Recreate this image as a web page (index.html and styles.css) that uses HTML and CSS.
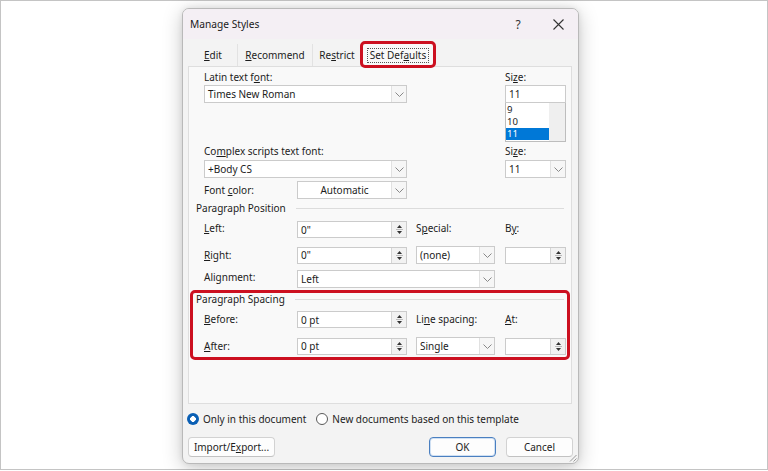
FILE: index.html
```html
<!DOCTYPE html>
<html>
<head>
<meta charset="utf-8">
<link rel="stylesheet" href="styles.css">
</head>
<body>
<div class="frame">
  <div class="dialog">
    <div class="titlebar">
      <span class="title">Manage Styles</span>
      <span class="tb-btn help">?</span>
      <span class="tb-btn close"><svg width="11" height="11" viewBox="0 0 11 11"><path d="M0.5 0.5L10.5 10.5M10.5 0.5L0.5 10.5" stroke="#333" stroke-width="1.1"/></svg></span>
    </div>

    <div class="tabs">
      <div class="tab t-edit"><u>E</u>dit</div>
      <div class="tab t-rec"><u>R</u>ecommend</div>
      <div class="tab t-res">Re<u>s</u>trict</div>
      <div class="tab t-set active"><span class="focus">Set Def<u>a</u>ults</span><span class="hl-tab"></span></div>
    </div>

    <div class="panel">
      <div class="row lab-row">
        <span class="w-wide">Latin text f<u>o</u>nt:</span>
        <span class="spacer"></span>
        <span class="w-size">Si<u>z</u>e:</span>
      </div>
      <div class="row latin-row">
        <div class="combo w-wide"><span class="val">Times New Roman</span><span class="dd"><svg width="9" height="5" viewBox="0 0 9 5"><path d="M0.5 0.5L4.5 4.5L8.5 0.5" fill="none" stroke="#888" stroke-width="1"/></svg></span></div>
        <span class="spacer"></span>
        <div class="sizebox w-size">
          <div class="size-input">11</div>
          <div class="size-list">
            <div class="items">
              <div class="item">9</div>
              <div class="item">10</div>
              <div class="item sel">11</div>
            </div>
            <div class="sbar"></div>
          </div>
        </div>
      </div>

      <div class="row lab-row lab2">
        <span class="w-wide">Co<u>m</u>plex scripts text font:</span>
        <span class="spacer"></span>
        <span class="w-size">Si<u>z</u>e:</span>
      </div>
      <div class="row ctl-row">
        <div class="combo w-wide"><span class="val">+Body CS</span><span class="dd"><svg width="9" height="5" viewBox="0 0 9 5"><path d="M0.5 0.5L4.5 4.5L8.5 0.5" fill="none" stroke="#888" stroke-width="1"/></svg></span></div>
        <span class="spacer"></span>
        <div class="combo w-size"><span class="val">11</span><span class="dd"><svg width="9" height="5" viewBox="0 0 9 5"><path d="M0.5 0.5L4.5 4.5L8.5 0.5" fill="none" stroke="#888" stroke-width="1"/></svg></span></div>
      </div>
      <div class="row ctl-row fc-row">
        <span class="c-lab">Font <u>c</u>olor:</span>
        <div class="combo c-ctl"><span class="val center">Automatic</span><span class="dd"><svg width="9" height="5" viewBox="0 0 9 5"><path d="M0.5 0.5L4.5 4.5L8.5 0.5" fill="none" stroke="#888" stroke-width="1"/></svg></span></div>
      </div>

      <div class="group-head pp-head"><span>Paragraph Position</span><span class="gline"></span></div>
      <div class="row frow r-left">
        <span class="c-lab up"><u>L</u>eft:</span>
        <div class="spin c-ctl"><span class="val">0"</span><span class="sb"><svg width="7" height="13" viewBox="0 0 7 13"><path d="M3.5 2L6 5H1Z" fill="#333"/><path d="M0 6.5H7" stroke="#bbb" stroke-width="1"/><path d="M1 8H6L3.5 11Z" fill="#333"/></svg></span></div>
        <span class="c-3 up">S<u>p</u>ecial:</span>
        <span class="c-4 up">B<u>y</u>:</span>
      </div>
      <div class="row frow r-right">
        <span class="c-lab"><u>R</u>ight:</span>
        <div class="spin c-ctl"><span class="val">0"</span><span class="sb"><svg width="7" height="13" viewBox="0 0 7 13"><path d="M3.5 2L6 5H1Z" fill="#333"/><path d="M0 6.5H7" stroke="#bbb" stroke-width="1"/><path d="M1 8H6L3.5 11Z" fill="#333"/></svg></span></div>
        <div class="combo c-3"><span class="val">(none)</span><span class="dd"><svg width="9" height="5" viewBox="0 0 9 5"><path d="M0.5 0.5L4.5 4.5L8.5 0.5" fill="none" stroke="#888" stroke-width="1"/></svg></span></div>
        <div class="spin c-4"><span class="val"></span><span class="sb"><svg width="7" height="13" viewBox="0 0 7 13"><path d="M3.5 2L6 5H1Z" fill="#333"/><path d="M0 6.5H7" stroke="#bbb" stroke-width="1"/><path d="M1 8H6L3.5 11Z" fill="#333"/></svg></span></div>
      </div>
      <div class="row frow r-align">
        <span class="c-lab up">Alignment:</span>
        <div class="combo c-wide2"><span class="val">Left</span><span class="dd"><svg width="9" height="5" viewBox="0 0 9 5"><path d="M0.5 0.5L4.5 4.5L8.5 0.5" fill="none" stroke="#888" stroke-width="1"/></svg></span></div>
      </div>

      <div class="redbox">
        <div class="group-head ps-head"><span>Paragraph Spacing</span><span class="gline"></span></div>
        <div class="row frow r-before">
          <span class="c-lab up1"><u>B</u>efore:</span>
          <div class="spin c-ctl"><span class="val">0 pt</span><span class="sb"><svg width="7" height="13" viewBox="0 0 7 13"><path d="M3.5 2L6 5H1Z" fill="#333"/><path d="M0 6.5H7" stroke="#bbb" stroke-width="1"/><path d="M1 8H6L3.5 11Z" fill="#333"/></svg></span></div>
          <span class="c-3 up1">Li<u>n</u>e spacing:</span>
          <span class="c-4 up1"><u>A</u>t:</span>
        </div>
        <div class="row frow r-after">
          <span class="c-lab"><u>A</u>fter:</span>
          <div class="spin c-ctl"><span class="val">0 pt</span><span class="sb"><svg width="7" height="13" viewBox="0 0 7 13"><path d="M3.5 2L6 5H1Z" fill="#333"/><path d="M0 6.5H7" stroke="#bbb" stroke-width="1"/><path d="M1 8H6L3.5 11Z" fill="#333"/></svg></span></div>
          <div class="combo c-3"><span class="val">Single</span><span class="dd"><svg width="9" height="5" viewBox="0 0 9 5"><path d="M0.5 0.5L4.5 4.5L8.5 0.5" fill="none" stroke="#888" stroke-width="1"/></svg></span></div>
          <div class="spin c-4"><span class="val"></span><span class="sb"><svg width="7" height="13" viewBox="0 0 7 13"><path d="M3.5 2L6 5H1Z" fill="#333"/><path d="M0 6.5H7" stroke="#bbb" stroke-width="1"/><path d="M1 8H6L3.5 11Z" fill="#333"/></svg></span></div>
        </div>
      </div>
    </div>

    <div class="radios">
      <span class="radio checked"></span><span class="rlabel">Only in this document</span>
      <span class="radio r2"></span><span class="rlabel">New documents based on this template</span>
    </div>

    <div class="buttons">
      <div class="btn b-import">Import/E<u>x</u>port...</div>
      <span class="spacer"></span>
      <div class="btn b-ok">OK</div>
      <div class="btn b-cancel">Cancel</div>
    </div>

    <svg class="grip" width="8" height="8" viewBox="0 0 8 8"><path d="M7.5 1L1 7.5M7.5 4.5L4.5 7.5" stroke="#999" stroke-width="1"/></svg>
  </div>
</div>
</body>
</html>
```

FILE: styles.css
```css
* { box-sizing: border-box; }
html, body { margin: 0; padding: 0; background: #fff; }
body {
  font-family: "Noto Sans", "Open Sans", sans-serif;
  font-size: 10px;
  color: #1c1c1c;
}
u { text-decoration: underline; text-underline-offset: 1px; }

.frame {
  width: 768px;
  height: 470px;
  border: 1px solid #c4c4c4;
  background: #fff;
  padding: 7px 0 0 181px;
}

.dialog {
  position: relative;
  width: 397px;
  height: 456px;
  background: #f3f3f3;
  border: 1px solid #b9b9b9;
  border-radius: 7px;
  box-shadow: 0 4px 20px rgba(0, 0, 0, 0.22), 0 0 6px rgba(0, 0, 0, 0.08);
  display: flex;
  flex-direction: column;
}

.titlebar {
  height: 30px;
  display: flex;
  align-items: center;
  background: #f4eff4;
  border-radius: 6px 6px 0 0;
  padding-left: 7px;
}
.title { flex: 1; font-size: 10.2px; color: #1a1a1a; }
.tb-btn {
  width: 40px;
  height: 30px;
  display: flex;
  align-items: center;
  justify-content: center;
}
.help { font-size: 12px; color: #333; }

.tabs {
  height: 27px;
  display: flex;
  align-items: flex-end;
  padding-left: 6px;
  position: relative;
  z-index: 2;
}
.tab {
  height: 22px;
  display: flex;
  align-items: center;
  justify-content: center;
  border-left: 1px solid #e2e2e2;
  color: #1c1c1c;
}
.t-edit { width: 48px; border-left: none; }
.t-rec { width: 75px; }
.t-res { width: 49px; }
.t-set {
  width: 72px;
  margin-left: 1px;
}
.tab.active {
  position: relative;
  background: #f9f9f9;
  border: 1px solid #dadada;
  border-bottom: none;
  margin-bottom: -1px;
  height: 25px;
}
.focus {
  border: 1px dotted #555;
  padding: 0 2px;
  line-height: 13px;
}
.hl-tab {
  position: absolute;
  left: -3px;
  top: -2px;
  right: -3px;
  bottom: -1px;
  border: 3px solid #cc1020;
  border-radius: 5px;
}

.panel {
  margin: 0 6px 0 5px;
  height: 338px;
  background: #f9f9f9;
  border: 1px solid #dedede;
  padding: 0 5px 0 7px;
  position: relative;
  z-index: 1;
}

.row { display: flex; align-items: center; margin-left: 8px; }
.spacer { flex: 1; }
.w-wide { width: 203px; }
.w-size { width: 61px; }

.lab-row { height: 14px; margin-top: 3px; line-height: 14px; }
.lab2 { margin-top: 2px; }
.latin-row { margin-top: 1px; align-items: flex-start; }
.ctl-row { margin-top: 2px; }
.fc-row { margin-top: 3px; }

.combo, .spin, .size-input {
  height: 18px;
  background: #fff;
  border: 1px solid #cbcbcb;
  display: flex;
  align-items: center;
}
.val {
  flex: 1;
  padding-left: 3px;
  white-space: nowrap;
  overflow: hidden;
}
.val.center { text-align: center; padding-left: 0; }
.dd {
  width: 15px;
  height: 16px;
  border-left: 1px solid #e1e1e1;
  background: #f6f6f6;
  display: flex;
  align-items: center;
  justify-content: center;
}
.spin { height: 17px; }
.sb {
  width: 15px;
  height: 15px;
  border-left: 1px solid #d5d5d5;
  background: #f2f2f2;
  display: flex;
  align-items: center;
  justify-content: center;
}

.sizebox { display: flex; flex-direction: column; }
.size-input { padding-left: 3px; }
.size-list {
  height: 39px;
  background: #fff;
  border: 1px solid #bdbdbd;
  border-top: none;
  display: flex;
}
.items { width: 43px; padding-top: 1px; }
.item { height: 12px; line-height: 12px; padding-left: 1px; font-size: 9.6px; }
.item.sel { background: #0078d7; color: #fff; }
.sbar { flex: 1; background: #efefef; }

.c-lab { width: 93px; }
.c-ctl { width: 110px; }
.c-3 { width: 79px; margin-left: 9px; }
.c-4 { width: 61px; margin-left: 10px; }
.c-wide2 { width: 198px; }
.up { position: relative; top: -2px; }
.up1 { position: relative; top: -1px; }

.group-head {
  display: flex;
  align-items: center;
  height: 14px;
  line-height: 14px;
}
.gline { flex: 1; height: 1px; background: #dcdcdc; margin-left: 10px; margin-right: 2px; }
.pp-head { margin-top: 2px; }
.r-left { margin-top: 6px; }
.r-right { margin-top: 8px; }
.r-align { margin-top: 6px; height: 18px; }
.r-align .combo { height: 18px; }

.redbox {
  margin: 2px -4px 0 -6px;
  border: 3px solid #cc1020;
  border-radius: 5px;
  padding: 0 1px 2px 3px;
}
.ps-head { height: 12px; line-height: 12px; }
.r-before { margin-top: 6px; }
.r-after { margin-top: 9px; }

.radios {
  display: flex;
  align-items: center;
  height: 14px;
  margin: 8px 0 0 4px;
}
.radio {
  width: 12px;
  height: 12px;
  border-radius: 50%;
  border: 1px solid #5a5a5a;
  background: #fff;
}
.radio.checked {
  border: none;
  background: radial-gradient(circle, #fff 0 2.6px, #0a5fb4 3px);
}
.rlabel { margin-left: 4px; }
.r2 { margin-left: 10px; }

.buttons {
  display: flex;
  margin: 11px 5px 0 5px;
}
.btn {
  height: 20px;
  background: #fdfdfd;
  border: 1px solid #d2d2d2;
  border-bottom-color: #c2c2c2;
  border-radius: 4px;
  display: flex;
  align-items: center;
  justify-content: center;
}
.b-import { width: 87px; }
.b-ok { width: 67px; border: 1px solid #4a7fc0; box-shadow: inset 0 0 0 1px #cfe0f3; }
.b-cancel { width: 67px; margin-left: 10px; }

.grip { position: absolute; right: 1px; bottom: 1px; }
```
